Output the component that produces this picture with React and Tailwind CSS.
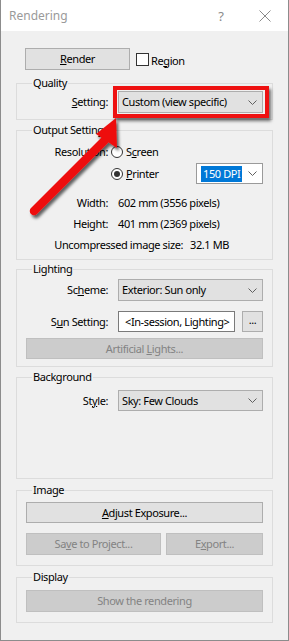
import React from "react";

const font = { fontFamily: '"Noto Sans", "Liberation Sans", sans-serif' };

function Chevron({ color = "#606060" }) {
  return (
    <svg width="9" height="5" viewBox="0 0 9 5" className="shrink-0">
      <polyline points="0.5,0.5 4.5,4.5 8.5,0.5" fill="none" stroke={color} strokeWidth="1" />
    </svg>
  );
}

function Combo({ children, className = "" }) {
  return (
    <div className={`flex items-center justify-between border border-[#adadad] bg-[#e1e1e1] pl-[3px] pr-[5px] ${className}`}>
      <span className="whitespace-nowrap">{children}</span>
      <Chevron />
    </div>
  );
}

function Btn({ children, disabled, className = "" }) {
  return (
    <div
      className={`flex items-center justify-center border whitespace-nowrap ${
        disabled ? "border-[#bfbfbf] bg-[#cccccc] text-[#838383]" : "border-[#adadad] bg-[#e1e1e1] text-black"
      } ${className}`}
    >
      {children}
    </div>
  );
}

function Group({ title, className = "", children }) {
  return (
    <fieldset className={`mx-[15px] border border-[#dcdcdc] px-[9px] ${className}`}>
      <legend className="ml-[6px] px-[1px] leading-[16px]">{title}</legend>
      {children}
    </fieldset>
  );
}

function Radio({ checked }) {
  return (
    <span className="flex h-[12px] w-[12px] shrink-0 items-center justify-center rounded-full border border-[#333333] bg-white">
      {checked && <span className="h-[6px] w-[6px] rounded-full bg-[#333333]" />}
    </span>
  );
}

export default function App() {
  return (
    <div
      className="relative h-[641px] w-[289px] overflow-hidden border-x border-b border-[#8c8c8c] bg-[#f0f0f0] text-[11px] leading-[16px] tracking-[-0.4px] text-black"
      style={font}
    >
      {/* Title bar */}
      <div className="flex h-[31px] items-center bg-white pl-[8px] text-[12px] tracking-normal text-[#9a9a9a]">
        <span className="flex-1">Rendering</span>
        <span className="mr-[35px] text-[13px] text-[#8a8a8a]">?</span>
        <svg width="12" height="12" viewBox="0 0 12 12" className="mr-[17px]">
          <line x1="0.5" y1="0.5" x2="11.5" y2="11.5" stroke="#8a8a8a" strokeWidth="1" />
          <line x1="11.5" y1="0.5" x2="0.5" y2="11.5" stroke="#8a8a8a" strokeWidth="1" />
        </svg>
      </div>

      {/* Render row */}
      <div className="flex items-center pl-[24px] pt-[17px]">
        <Btn className="h-[22px] w-[105px]">
          <span>
            <u>R</u>ender
          </span>
        </Btn>
        <span className="ml-[6px] h-[13px] w-[13px] border border-[#333333] bg-white" />
        <span className="ml-[2px] mt-[3px]">
          Re<u>g</u>ion
        </span>
      </div>

      {/* Quality */}
      <Group title="Quality" className="mt-[5px] pb-[6px]">
        <div className="flex items-center">
          <span className="w-[82px] text-right">
            <u>S</u>etting:
          </span>
          <Combo className="ml-[10px] h-[22px] w-[145px]">Custom (view specific)</Combo>
        </div>
      </Group>

      {/* Output settings */}
      <Group title="Output Settings" className="mt-[2px] pb-[4px]">
        <div className="mt-[4px] flex h-[20px] items-center">
          <span className="w-[82px] text-right">Resolution:</span>
          <span className="ml-[3px]">
            <Radio />
          </span>
          <span className="ml-[3px]">
            S<u>c</u>reen
          </span>
        </div>
        <div className="mt-[1px] flex h-[21px] items-center">
          <span className="w-[82px]" />
          <span className="ml-[3px]">
            <Radio checked />
          </span>
          <span className="ml-[3px] w-[70px]">
            <u>P</u>rinter
          </span>
          <div className="flex h-[21px] w-[67px] items-center border border-[#9a9a9a] bg-white pl-[4px] pr-[5px]">
            <span className="whitespace-nowrap bg-[#0078d7] px-[2px] text-white">150 DPI</span>
            <span className="flex-1" />
            <Chevron />
          </div>
        </div>
        <div className="mt-[9px] flex h-[20px] items-center">
          <span className="w-[82px] text-right">Width:</span>
          <span className="ml-[10px]">602 mm (3556 pixels)</span>
        </div>
        <div className="mt-[1px] flex h-[20px] items-center">
          <span className="w-[82px] text-right">Height:</span>
          <span className="ml-[10px]">401 mm (2369 pixels)</span>
        </div>
        <div className="mt-[1px] flex h-[20px] items-center">
          <span className="w-[157px] text-right">Uncompressed image size:</span>
          <span className="ml-[7px]">32.1 MB</span>
        </div>
      </Group>

      {/* Lighting */}
      <Group title="Lighting" className="mt-[1px] pb-[7px]">
        <div className="mt-[2px] flex items-center">
          <span className="w-[82px] text-right">
            Sc<u>h</u>eme:
          </span>
          <Combo className="ml-[10px] h-[22px] w-[145px]">Exterior: Sun only</Combo>
        </div>
        <div className="mt-[10px] flex items-center">
          <span className="w-[82px] text-right">
            S<u>u</u>n Setting:
          </span>
          <div className="ml-[10px] flex h-[21px] w-[117px] items-center border border-[#7a7a7a] bg-white pl-[6px] whitespace-nowrap">
            &lt;In-session, Lighting&gt;
          </div>
          <Btn className="ml-[7px] h-[21px] w-[21px] pb-[3px]">...</Btn>
        </div>
        <Btn disabled className="mt-[6px] h-[21px] w-full">
          <span>
            Artificial <u>L</u>ights...
          </span>
        </Btn>
      </Group>

      {/* Background */}
      <Group title="Background" className="mt-[2px] h-[110px]">
        <div className="mt-[5px] flex items-center">
          <span className="w-[82px] text-right">
            St<u>y</u>le:
          </span>
          <Combo className="ml-[10px] h-[21px] w-[145px]">Sky: Few Clouds</Combo>
        </div>
      </Group>

      {/* Image */}
      <Group title="Image" className="mt-[3px] pb-[10px]">
        <Btn className="mt-[4px] h-[21px] w-full">
          <span>
            <u>A</u>djust Exposure...
          </span>
        </Btn>
        <div className="mt-[10px] flex gap-[5px]">
          <Btn disabled className="h-[22px] w-[135px]">
            <span>
              Sa<u>v</u>e to Project...
            </span>
          </Btn>
          <Btn disabled className="h-[22px] flex-1">
            <span>
              E<u>x</u>port...
            </span>
          </Btn>
        </div>
      </Group>

      {/* Display */}
      <Group title="Display" className="mt-[3px] pb-[10px]">
        <Btn disabled className="mt-[5px] h-[22px] w-full">
          Show the rendering
        </Btn>
      </Group>

      {/* Annotation overlay: red highlight box */}
      <div className="pointer-events-none absolute left-[112px] top-[86px] h-[32px] w-[156px] border-[4px] border-[#ee1111] shadow-[2px_3px_3px_rgba(0,0,0,0.55)]" />

      {/* Annotation overlay: red arrow */}
      <svg className="pointer-events-none absolute left-0 top-0" width="289" height="641" viewBox="0 0 289 641">
        <defs>
          <filter id="sh" x="-20%" y="-20%" width="140%" height="140%">
            <feDropShadow dx="2" dy="3" stdDeviation="1.6" floodColor="#000" floodOpacity="0.6" />
          </filter>
        </defs>
        <g filter="url(#sh)">
          <line x1="33" y1="211" x2="104" y2="140" stroke="#ee1111" strokeWidth="8.5" strokeLinecap="round" />
          <polygon points="115,118 95,134 116,148" fill="#ee1111" />
        </g>
      </svg>
    </div>
  );
}
